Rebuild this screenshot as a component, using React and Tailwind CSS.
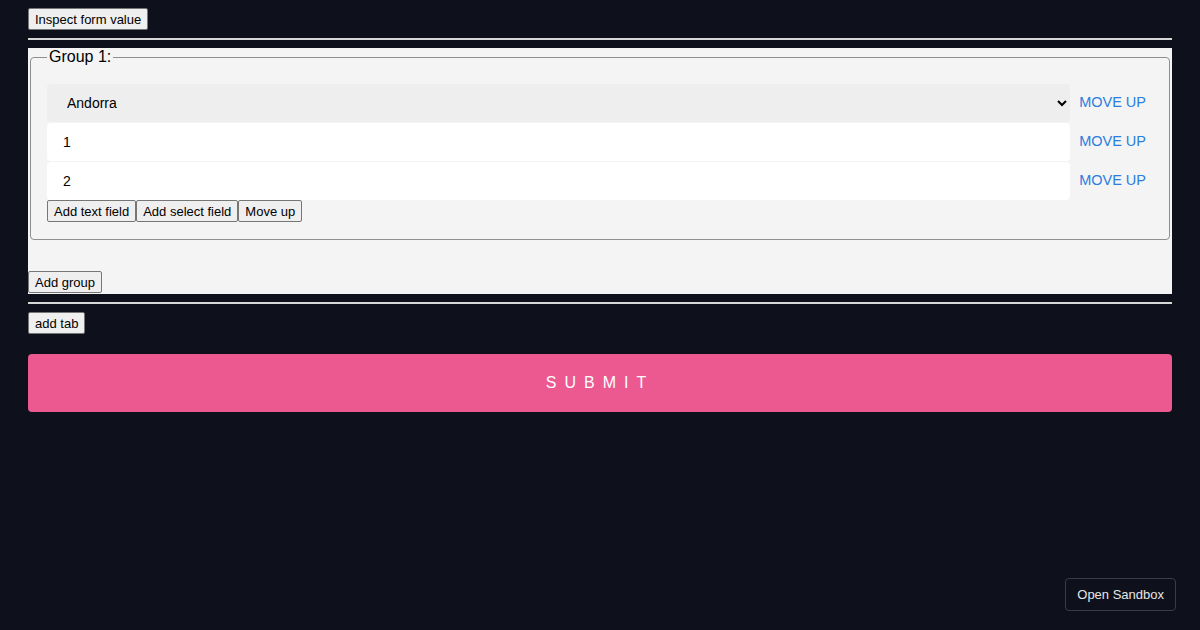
import { useState } from "react";

const btn =
  "block h-[22px] px-[6px] text-[13px] leading-none text-black bg-[#efefef] border border-[#767676] rounded-[2px]";

const FieldRow = ({ children }) => (
  <div className="flex items-center">
    <div className="flex-1">{children}</div>
    <a className="ml-[9px] mr-[7px] text-[14.5px] text-[#2b7de0] cursor-pointer">MOVE UP</a>
  </div>
);

export default function App() {
  const [country, setCountry] = useState("Andorra");

  return (
    <div
      className="relative min-h-screen bg-[#0e101c] px-7 pt-2"
      style={{ fontFamily: '"Liberation Sans", Arial, sans-serif' }}
    >
      <button className={btn}>Inspect form value</button>
      <hr className="mt-2 border-t-2 border-[#d6d6d6]" />

      {/* tab panel */}
      <div className="mt-2 bg-[#f4f4f4] pb-[1px]">
        <fieldset className="mx-[2px] border border-[#8f8f8f] rounded-[4px] px-4 pb-[17px]">
          <legend className="px-[2px] text-[16px] leading-[18px] text-black">Group 1:</legend>
          <div className="pt-[18px] flex flex-col gap-[1px]">
            <FieldRow>
              <select
                value={country}
                onChange={(e) => setCountry(e.target.value)}
                className="block w-full h-[38px] bg-[#eeeeee] rounded-[4px] pl-4 pr-2 text-[14px] text-black"
              >
                <option>Andorra</option>
                <option>Austria</option>
                <option>Belgium</option>
              </select>
            </FieldRow>
            <FieldRow>
              <input
                defaultValue="1"
                className="block w-full h-[38px] bg-white rounded-[4px] px-4 text-[14px] text-black"
              />
            </FieldRow>
            <FieldRow>
              <input
                defaultValue="2"
                className="block w-full h-[38px] bg-white rounded-[4px] px-4 text-[14px] text-black"
              />
            </FieldRow>
          </div>
          <div className="flex">
            <button className={btn}>Add text field</button>
            <button className={btn}>Add select field</button>
            <button className={btn}>Move up</button>
          </div>
        </fieldset>
        <div className="mt-[31px]">
          <button className={btn}>Add group</button>
        </div>
      </div>

      <hr className="mt-2 border-t-2 border-[#d6d6d6]" />
      <button className={`${btn} mt-[8px]`}>add tab</button>

      <button className="block mt-5 w-full h-[58px] rounded-[4px] bg-[#ec5990] text-white text-[16px] tracking-[0.5em] uppercase">
        Submit
      </button>

      <button className="absolute right-[24px] bottom-[19px] h-[33px] px-[11px] rounded-[4px] border border-[#3a3d48] bg-[#0e101c] text-[13px] text-[#e6e6e6]">
        Open Sandbox
      </button>
    </div>
  );
}
